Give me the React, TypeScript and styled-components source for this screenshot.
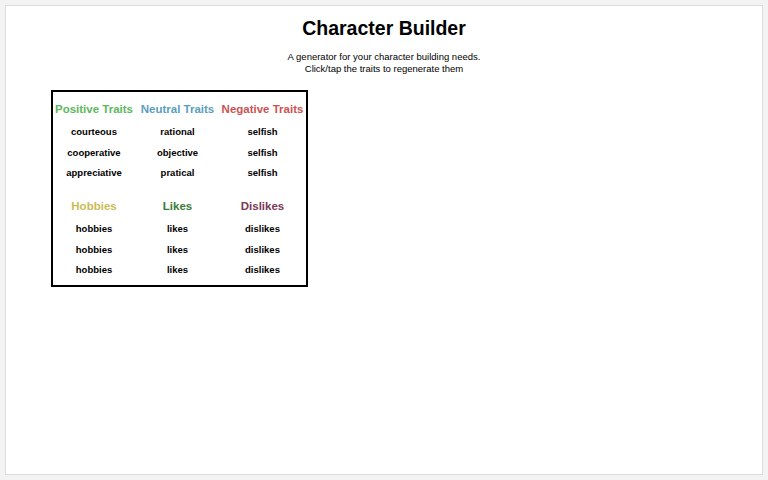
import styled, { createGlobalStyle } from 'styled-components';

const GlobalStyle = createGlobalStyle`
  html, body {
    margin: 0;
    padding: 0;
    background: #f3f3f3;
  }
  body {
    padding: 5px;
    font-family: "Liberation Sans", Arial, sans-serif;
  }
  * {
    box-sizing: border-box;
  }
`;

const Page = styled.div`
  height: 470px;
  background: #ffffff;
  border: 1px solid #dcdcdc;
  padding: 10px 0 0 45px;
  display: flex;
  flex-direction: column;
`;

const Title = styled.h1`
  margin: 0 0 0 -45px;
  font-size: 19.5px;
  line-height: 24px;
  font-weight: bold;
  text-align: center;
  color: #000;
`;

const Subtitle = styled.p`
  margin: 11px 0 0 -45px;
  font-size: 9.5px;
  line-height: 12px;
  text-align: center;
  color: #000;
`;

const Builder = styled.div`
  margin-top: 15px;
  width: 257px;
  border: 2px solid #000;
  padding: 7px 0 4px;
`;

const Section = styled.div<{ $gap?: number }>`
  display: grid;
  grid-template-columns: 82px 85px 85px;
  margin-top: ${(p) => p.$gap ?? 0}px;
`;

const Heading = styled.div<{ $color: string }>`
  height: 20px;
  line-height: 20px;
  font-size: 11.5px;
  font-weight: bold;
  text-align: center;
  white-space: nowrap;
  color: ${(p) => p.$color};
  margin-bottom: 3px;
`;

const Column = styled.div`
  display: flex;
  flex-direction: column;
  align-items: center;
`;

const Trait = styled.div`
  height: 20.5px;
  line-height: 20.5px;
  font-size: 9.5px;
  font-weight: bold;
  color: #000;
  cursor: pointer;
  white-space: nowrap;
`;

type Col = { title: string; color: string; items: string[] };

const traits: Col[] = [
  { title: 'Positive Traits', color: '#5cb85c', items: ['courteous', 'cooperative', 'appreciative'] },
  { title: 'Neutral Traits', color: '#5a9ec0', items: ['rational', 'objective', 'pratical'] },
  { title: 'Negative Traits', color: '#cc5252', items: ['selfish', 'selfish', 'selfish'] },
];

const extras: Col[] = [
  { title: 'Hobbies', color: '#c8bc55', items: ['hobbies', 'hobbies', 'hobbies'] },
  { title: 'Likes', color: '#3a7a3a', items: ['likes', 'likes', 'likes'] },
  { title: 'Dislikes', color: '#7a3858', items: ['dislikes', 'dislikes', 'dislikes'] },
];

function TraitSection({ cols, gap }: { cols: Col[]; gap?: number }) {
  return (
    <Section $gap={gap}>
      {cols.map((c) => (
        <Column key={c.title}>
          <Heading $color={c.color}>{c.title}</Heading>
          {c.items.map((item, i) => (
            <Trait key={i}>{item}</Trait>
          ))}
        </Column>
      ))}
    </Section>
  );
}

export default function App() {
  return (
    <>
      <GlobalStyle />
      <Page>
        <Title>Character Builder</Title>
        <Subtitle>
          A generator for your character building needs.
          <br />
          Click/tap the traits to regenerate them
        </Subtitle>
        <Builder>
          <TraitSection cols={traits} />
          <TraitSection cols={extras} gap={12.5} />
        </Builder>
      </Page>
    </>
  );
}
